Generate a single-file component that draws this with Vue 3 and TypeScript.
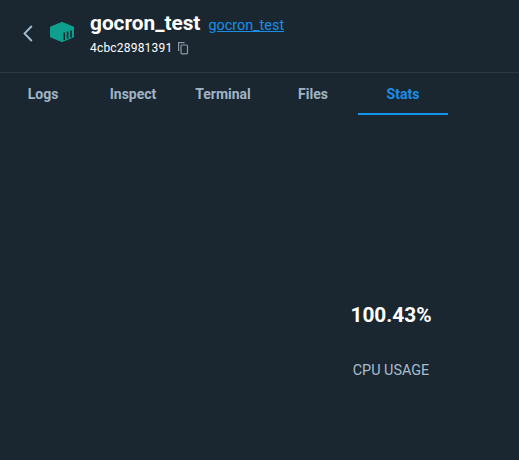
<script setup lang="ts">
const tabs: string[] = ['Logs', 'Inspect', 'Terminal', 'Files', 'Stats']
const active = 'Stats'
</script>

<template>
  <div class="page">
    <header class="head">
      <svg class="back" width="12" height="18" viewBox="0 0 12 18" fill="none">
        <path d="M9.800 2 2.500 9.500l7.300 7.500" stroke="#a9bccd" stroke-width="1.800" />
      </svg>
      <svg class="logo" width="26" height="24" viewBox="0 0 26 24">
        <path d="M13 3 24 7.500v9L13 21 2 16.500v-9z" fill="#0e9f8e" stroke="#0e9f8e" stroke-width="2" stroke-linejoin="round" />
        <path d="M15.300 12.500v7.500M18.600 11.500v7.200M22 10.500v7" stroke="#1a2730" stroke-width="1.600" fill="none" />
      </svg>
      <div class="titles">
        <div class="line">
          <span class="name">gocron_test</span>
          <a class="link">gocron_test</a>
        </div>
        <div class="idline">
          <span class="id">4cbc28981391</span>
          <svg class="copy" width="12" height="14" viewBox="0 0 12 14" fill="none" stroke="#8a9aa8" stroke-width="1.200">
            <path d="M1.600 10V1.600h6" />
            <rect x="4" y="4" width="6.500" height="8.800" rx="1" />
          </svg>
        </div>
      </div>
    </header>
    <nav class="tabs">
      <div v-for="t in tabs" :key="t" class="tab" :class="{ on: t === active }">{{ t }}</div>
    </nav>
    <section class="stats">
      <div class="stat">
        <div class="value">100.43%</div>
        <div class="label">CPU USAGE</div>
      </div>
    </section>
  </div>
</template>

<style>
html, body { margin: 0; background: #1a2730; }
</style>

<style scoped>
.page {
  width: 519px;
  height: 460px;
  background: #1a2730;
  font-family: Roboto, "Liberation Sans", sans-serif;
  overflow: hidden;
}
.head {
  height: 73px;
  box-sizing: border-box;
  border-bottom: 1px solid #2e3a42;
  display: flex;
  align-items: flex-start;
  padding: 11px 0 0 22px;
}
.back { margin-top: 13px; }
.logo { margin: 9px 0 0 15px; }
.titles { margin-left: 15px; }
.line { display: flex; align-items: baseline; height: 24px; }
.name { font-size: 20.8px; font-weight: 700; line-height: 24px; color: #fff; }
.link { font-size: 14.4px; margin-left: 8px; color: #1b8fe8; text-decoration: underline; }
.idline { display: flex; align-items: center; margin-top: 4px; height: 18px; }
.id { font-size: 12px; font-weight: 400; color: #fff; letter-spacing: .2px; }
.copy { margin-left: 5px; }
.tabs { display: flex; height: 42px; margin-left: -2px; }
.tab {
  width: 90px;
  box-sizing: border-box;
  text-align: center;
  padding-top: 13px;
  font-size: 14px;
  font-weight: 700;
  color: #a0b4c6;
}
.tab.on { color: #1b8fe8; border-bottom: 2px solid #1193ee; }
.stats {
  display: flex;
  justify-content: flex-end;
  padding: 188px 78px 0 0;
}
.stat { width: 100px; text-align: center; }
.value { font-size: 20.8px; font-weight: 700; color: #fff; line-height: 24px; }
.label { font-size: 14.4px; color: #a9bccd; line-height: 16px; margin-top: 36px; }
</style>
